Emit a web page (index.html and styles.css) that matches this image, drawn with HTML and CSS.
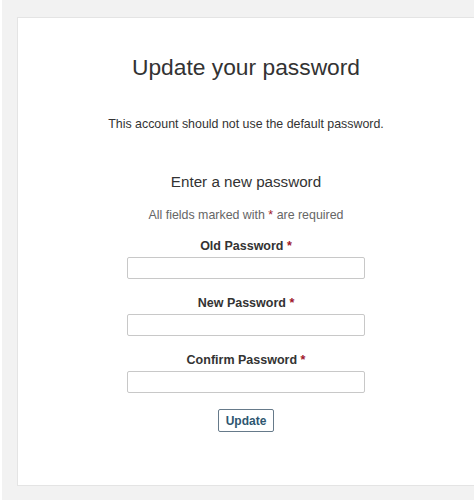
FILE: index.html
```html
<!DOCTYPE html>
<html lang="en">
<head>
  <meta charset="UTF-8">
  <meta name="viewport" content="width=device-width, initial-scale=1.0">
  <title>Update your password</title>
  <link rel="stylesheet" href="styles.css">
</head>
<body>
<div class="page">
  <div class="card">
    <h1>Update your password</h1>
    <p class="notice">This account should not use the default password.</p>

    <form class="pw-form">
      <h2>Enter a new password</h2>
      <p class="required-note">All fields marked with <span class="star">*</span> are required</p>

      <div class="field">
        <label for="old-pw">Old Password <span class="star">*</span></label>
        <input type="password" id="old-pw">
      </div>
      <div class="field">
        <label for="new-pw">New Password <span class="star">*</span></label>
        <input type="password" id="new-pw">
      </div>
      <div class="field">
        <label for="confirm-pw">Confirm Password <span class="star">*</span></label>
        <input type="password" id="confirm-pw">
      </div>

      <button type="submit" class="btn">Update</button>
    </form>
  </div>
</div>
</body>
</html>
```

FILE: styles.css
```css
* {
    margin: 0;
    padding: 0;
    box-sizing: border-box;
}

body {
    background-color: #fff;
    font-family: "Liberation Sans", Arial, sans-serif;
    color: #333;
}

.page {
    background-color: #f2f2f2;
    margin: 0 0 3px 2px;
    padding: 17px 0 14px 15px;
    height: 500px;
}

.card {
    background-color: #fff;
    border: 1px solid #e4e4e4;
    border-right: none;
    height: 469px;
    text-align: center;
    padding-top: 36px;
}

h1 {
    font-size: 22.8px;
    font-weight: normal;
    color: #333;
    line-height: 27px;
}

.notice {
    font-size: 12.4px;
    line-height: 15px;
    margin-top: 36px;
}

h2 {
    font-size: 15.2px;
    font-weight: normal;
    line-height: 18px;
    margin-top: 41px;
}

.required-note {
    font-size: 12.4px;
    line-height: 15px;
    color: #666;
    margin-top: 17px;
}

.star {
    color: #a0192b;
}

.field {
    display: flex;
    flex-direction: column;
    align-items: center;
    gap: 3px;
    margin-top: 16px;
}

.field + .field {
    margin-top: 17px;
}

label {
    font-size: 12.5px;
    line-height: 15px;
    font-weight: bold;
    color: #333;
}

input {
    width: 238px;
    height: 22px;
    border: 1px solid #c8c8c8;
    border-radius: 2px;
    background: #fff;
}

.btn {
    margin-top: 16px;
    width: 56px;
    height: 23px;
    border: 1px solid #667a8a;
    border-radius: 2px;
    background: #fff;
    color: #2e5670;
    font-family: "Liberation Sans", Arial, sans-serif;
    font-size: 12px;
    font-weight: bold;
    cursor: pointer;
}
```
